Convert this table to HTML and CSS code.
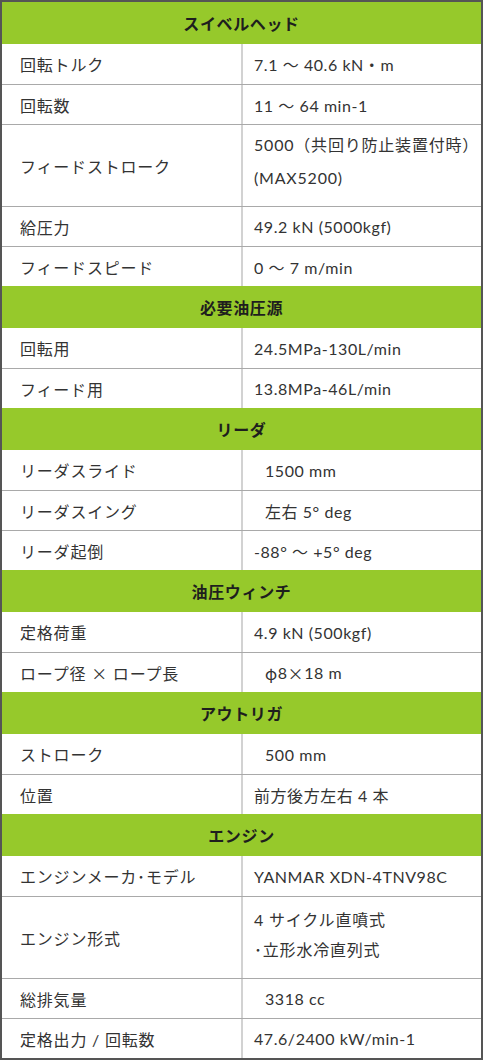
FILE: index.html
```html
<!DOCTYPE html>
<html lang="ja">
<head>
<meta charset="utf-8">
<title>仕様</title>
<link rel="stylesheet" href="styles.css">
</head>
<body>
<div class="spec">
  <div class="sec">スイベルヘッド</div>
  <div class="row"><div class="k">回転トルク</div><div class="v">7.1 〜 40.6 kN・m</div></div>
  <div class="row"><div class="k">回転数</div><div class="v">11 〜 64 min-1</div></div>
  <div class="row tall"><div class="k">フィードストローク</div><div class="v multi wide">5000（共回り防止装置付時）<br>(MAX5200)</div></div>
  <div class="row"><div class="k">給圧力</div><div class="v">49.2 kN (5000kgf)</div></div>
  <div class="row"><div class="k">フィードスピード</div><div class="v">0 〜 7 m/min</div></div>

  <div class="sec">必要油圧源</div>
  <div class="row"><div class="k">回転用</div><div class="v">24.5MPa-130L/min</div></div>
  <div class="row"><div class="k">フィード用</div><div class="v">13.8MPa-46L/min</div></div>

  <div class="sec">リーダ</div>
  <div class="row"><div class="k">リーダスライド</div><div class="v ind">1500 mm</div></div>
  <div class="row"><div class="k">リーダスイング</div><div class="v ind">左右 5° deg</div></div>
  <div class="row"><div class="k">リーダ起倒</div><div class="v">-88° 〜 +5° deg</div></div>

  <div class="sec">油圧ウィンチ</div>
  <div class="row"><div class="k">定格荷重</div><div class="v">4.9 kN (500kgf)</div></div>
  <div class="row"><div class="k">ロープ径 <span class="cjk">×</span> ロープ長</div><div class="v ind"><span class="cjk">φ</span>8<span class="cjk">×</span>18 m</div></div>

  <div class="sec">アウトリガ</div>
  <div class="row"><div class="k">ストローク</div><div class="v ind">500 mm</div></div>
  <div class="row"><div class="k">位置</div><div class="v">前方後方左右 4 本</div></div>

  <div class="sec">エンジン</div>
  <div class="row"><div class="k">エンジンメーカ･モデル</div><div class="v">YANMAR XDN-4TNV98C</div></div>
  <div class="row tall"><div class="k">エンジン形式</div><div class="v multi">4 サイクル直噴式<br>･立形水冷直列式</div></div>
  <div class="row"><div class="k">総排気量</div><div class="v ind">3318 cc</div></div>
  <div class="row"><div class="k">定格出力 / 回転数</div><div class="v">47.6/2400 kW/min-1</div></div>
</div>
</body>
</html>
```

FILE: styles.css
```css
html, body {
  margin: 0;
  padding: 0;
  background: #ffffff;
}

body {
  font-family: "Lato", "Noto Sans CJK JP", sans-serif;
  font-size: 16px;
  color: #333333;
}

.spec {
  width: 483px;
  box-sizing: border-box;
  border: 2px solid #555555;
}

.sec {
  height: 42px;
  display: flex;
  align-items: center;
  justify-content: center;
  background: #96c92b;
  color: #1e1e1e;
  font-weight: 700;
  letter-spacing: 0.04em;
}

.row {
  display: grid;
  grid-template-columns: 241px 1fr;
  height: 40px;
  box-sizing: border-box;
  border-top: 1px solid #a9a9a9;
}

.sec + .row {
  border-top: 0;
}

.row.tall {
  height: 82px;
}

.k, .v {
  display: flex;
  align-items: center;
  letter-spacing: 0.05em;
  white-space: pre;
}

.k {
  padding-left: 18px;
  border-right: 2px solid #d2d2d2;
}

.v {
  padding-left: 11px;
  letter-spacing: 0.035em;
}

.v.ind {
  padding-left: 22px;
}

.v.multi {
  line-height: 30px;
  padding-bottom: 6px;
  box-sizing: border-box;
  letter-spacing: 0.05em;
}

.v.wide {
  line-height: 33px;
  padding-bottom: 10px;
}

.cjk {
  font-family: "Noto Sans CJK JP", sans-serif;
}
```
